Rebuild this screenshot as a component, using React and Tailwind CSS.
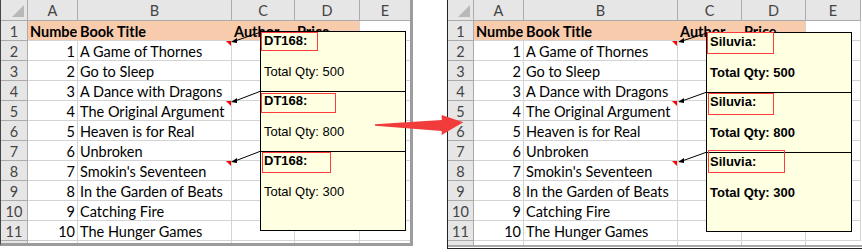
import React from "react";

const books = [
  "A Game of Thornes",
  "Go to Sleep",
  "A Dance with Dragons",
  "The Original Argument",
  "Heaven is for Real",
  "Unbroken",
  "Smokin's Seventeen",
  "In the Garden of Beats",
  "Catching Fire",
  "The Hunger Games",
];

const cell = "border-r border-b border-[#d4d4d4] h-[20px] leading-[20px] pt-[1px] overflow-hidden whitespace-nowrap";
const head = "border-r border-b border-[#ababab] bg-[#e6e6e6] text-[#444] text-center";

function Sheet({ cols, right }) {
  const template = right
    ? "grid-cols-[26px_50px_154px_64px_64px_55px]"
    : "grid-cols-[27px_50px_154px_63px_65px_51px]";
  return (
    <div className={`grid ${template} grid-rows-[21px_repeat(11,20px)_4px] font-['Lato',sans-serif] text-[14.5px] text-black`}>
      <div className={`${head} relative`}>
        <div className="absolute right-[3px] bottom-[3px] w-0 h-0 border-l-[12px] border-l-transparent border-b-[12px] border-b-[#b8b8b8]" />
      </div>
      {["A", "B", "C", "D", "E"].map((c) => (
        <div key={c} className={`${head} leading-[21px]`}>{c}</div>
      ))}

      <div className={`${head} ${cell} !border-[#ababab]`}>1</div>
      <div className={`${cell} bg-[#f8cbad] font-bold pl-[2px] !border-r-[#f8cbad]`}>Numbe</div>
      <div className={`${cell} bg-[#f8cbad] font-bold pl-[2px] !border-r-[#f8cbad]`}>Book Title</div>
      <div className={`${cell} bg-[#f8cbad] font-bold pl-[2px] !border-r-[#f8cbad]`}>Author</div>
      <div className={`${cell} bg-[#f8cbad] font-bold pl-[2px]`}>Price</div>
      <div className={cell} />

      {books.map((b, i) => (
        <React.Fragment key={b}>
          <div className={`${head} ${cell} !border-[#ababab]`}>{i + 2}</div>
          <div className={`${cell} text-right pr-[2px]`}>{i + 1}</div>
          <div className={`${cell} pl-[2px] relative !overflow-visible`}>
            {b}
            {(i === 0 || i === 3 || i === 6) && (
              <div className="absolute right-[0px] top-0 w-0 h-0 border-l-[5px] border-l-transparent border-t-[5px] border-t-[#ff0000]" />
            )}
          </div>
          <div className={cell} />
          <div className={cell} />
          <div className={cell} />
        </React.Fragment>
      ))}

      <div className="bg-[#e6e6e6] border-r border-[#ababab]" />
      <div className="border-r border-[#d4d4d4]" />
      <div className="border-r border-[#d4d4d4]" />
      <div className="border-r border-[#d4d4d4]" />
      <div className="border-r border-[#d4d4d4]" />
      <div />
    </div>
  );
}

function Comment({ top, height, left, width, name, qty, box, bold }) {
  return (
    <>
      <div
        className={`absolute bg-[#ffffe1] border border-black font-['Liberation_Sans',Arial,sans-serif] text-[13px] leading-[15.5px] pl-[3px] pt-[1px] text-black ${bold ? "font-bold" : ""}`}
        style={{ top, height, left, width }}
      >
        <div className="font-bold">{name}</div>
        <div>&nbsp;</div>
        <div>Total Qty: {qty}</div>
      </div>
      <div className="absolute border border-[#ff3b3b]" style={box} />
    </>
  );
}

function Connectors({ boxLeft, tops }) {
  return (
    <svg className="absolute inset-0 pointer-events-none" width="420" height="252">
      {tops.map(([y0, y1], i) => (
        <g key={i}>
          <line x1={boxLeft} y1={y0} x2={234} y2={y1} stroke="#000" strokeWidth="1" />
          <polygon points={`230,${y1 + 1} 236,${y1 - 3} 236,${y1 + 2}`} fill="#000" />
        </g>
      ))}
    </svg>
  );
}

export default function App() {
  const leftComments = [
    { top: 31, height: 61, name: "DT168:", qty: 500, box: { left: 260, top: 32, width: 57, height: 19 } },
    { top: 91, height: 61, name: "DT168:", qty: 800, box: { left: 260, top: 93, width: 75, height: 20 } },
    { top: 151, height: 80, name: "DT168:", qty: 300, box: { left: 261, top: 152, width: 69, height: 21 } },
  ];
  const rightComments = [
    { top: 32, height: 61, name: "Siluvia:", qty: 500, box: { left: 259, top: 32, width: 67, height: 22 } },
    { top: 92, height: 61, name: "Siluvia:", qty: 800, box: { left: 260, top: 93, width: 66, height: 22 } },
    { top: 152, height: 80, name: "Siluvia:", qty: 300, box: { left: 260, top: 150, width: 77, height: 23 } },
  ];

  return (
    <div className="w-[862px] h-[252px] bg-white flex relative overflow-hidden">
      {/* before */}
      <div className="relative w-[413px] h-[246px] border-l border-[#444] border-r-[3px] border-b-[3px] border-r-[#9c9c9c] border-b-[#9c9c9c] overflow-hidden shrink-0">
        <Sheet />
        <Connectors boxLeft={260} tops={[[32, 41], [91, 101], [151, 161]]} />
        {leftComments.map((c) => (
          <Comment key={c.top} {...c} left={259} width={146} />
        ))}
      </div>

      <div className="w-[34px] shrink-0" />

      {/* after */}
      <div className="relative w-[415px] h-[249px] border-l border-[#222] border-b border-b-[#222] overflow-hidden shrink-0">
        <div className="border-b-2 border-[#a8a8a8]">
          <Sheet right />
        </div>
        <Connectors boxLeft={259} tops={[[33, 41], [92, 101], [152, 161]]} />
        {rightComments.map((c) => (
          <Comment key={c.top} {...c} left={258} width={146} bold />
        ))}
      </div>

      {/* red arrow */}
      <svg className="absolute left-[370px] top-[110px]" width="100" height="30">
        <polygon points="5,14.3 71.7,10 71.7,5 93.3,12.3 71.7,25 71.7,21 5,15.7" fill="#f23c3c" />
      </svg>
    </div>
  );
}
